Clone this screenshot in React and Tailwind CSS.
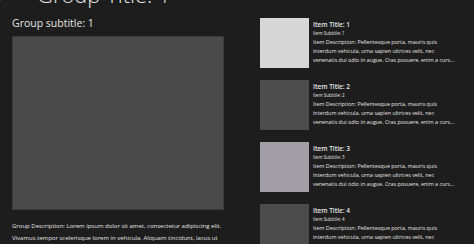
const items = [
  { id: 1, image: 'bg-[#d7d7d7]' },
  { id: 2, image: 'bg-[#4d4d4d]' },
  { id: 3, image: 'bg-[#a19fa5]' },
  { id: 4, image: 'bg-[#4b4b4b]' },
];

const ItemRow = ({ item }) => (
  <div className="flex mb-[12px]">
    <div className={`w-[49px] h-[50px] shrink-0 ${item.image}`} />
    <div className="ml-[4px] pt-[3px] whitespace-nowrap">
      <div className="text-[6.5px] leading-[8px] font-semibold">Item Title: {item.id}</div>
      <div className="text-[4.5px] leading-[8px]">Item Subtitle: {item.id}</div>
      <div className="text-[5.4px] leading-[9px] pt-[1px]">
        <span className="block">Item Description: Pellentesque porta, mauris quis</span>
        <span className="block">interdum vehicula, urna sapien ultrices velit, nec</span>
        <span className="block">venenatis dui odio in augue. Cras posuere, enim a curs...</span>
      </div>
    </div>
  </div>
);

export default function App() {
  return (
    <div
      className="w-[474px] h-[244px] overflow-hidden bg-[#1d1d1d] text-[#e6e6e6]"
      style={{ fontFamily: '"Open Sans", "Noto Sans", sans-serif' }}
    >
      {/* Page header, scrolled mostly out of view */}
      <div className="flex items-start h-[15px]">
        <div className="w-[28px] h-[28px] -mt-[25px] -ml-[22px] rounded-full border-2 border-[#e6e6e6]" />
        <h1 className="-mt-[17px] ml-[31px] text-[22px] leading-[22px] font-light whitespace-nowrap">Group Title: 1</h1>
      </div>

      <div className="flex pl-[12px]">
        {/* Group details */}
        <div className="w-[212px] shrink-0">
          <h2 className="text-[10.5px] leading-[16px]">Group subtitle: 1</h2>
          <div className="mt-[5px] h-[174px] bg-[#4a4a4a] border border-[#3a3a3a]" />
          <p className="mt-[10px] text-[6px] leading-[12px] whitespace-nowrap">
            <span className="block">Group Description: Lorem ipsum dolor sit amet, consectetur adipiscing elit.</span>
            <span className="block">Vivamus tempor scelerisque lorem in vehicula. Aliquam tincidunt, lacus ut</span>
          </p>
        </div>

        {/* Items */}
        <div className="ml-[36px] mt-[3px]">
          {items.map((item) => (
            <ItemRow key={item.id} item={item} />
          ))}
        </div>
      </div>
    </div>
  );
}
